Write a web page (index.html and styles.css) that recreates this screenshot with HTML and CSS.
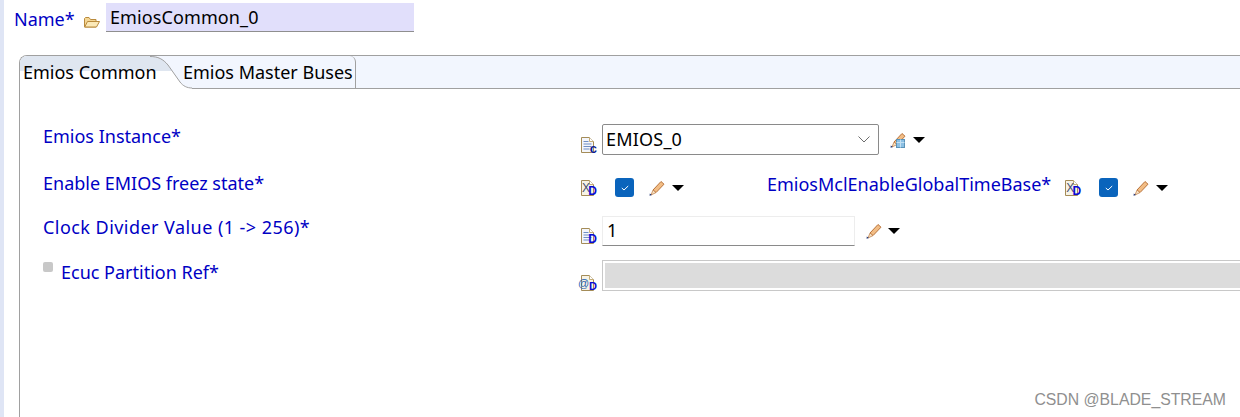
FILE: index.html
```html
<!DOCTYPE html>
<html lang="en">
<head>
    <meta charset="UTF-8">
    <meta name="viewport" content="width=device-width, initial-scale=1.0">
    <title>EmiosCommon_0</title>
    <link rel="stylesheet" href="styles.css">
</head>
<body>
    <svg class="defs" width="0" height="0">
        <defs>
            <symbol id="doc" viewBox="0 0 14 16">
                <path d="M.5.5h8l4 4v11H.5z" fill="#f7f3e6" stroke="#a48c58"/>
                <path d="M8.5.5v4h4" fill="#fff" stroke="#c4ad78"/>
            </symbol>
            <symbol id="doc-lines" viewBox="0 0 14 16">
                <path d="M.5.5h8l4 4v11H.5z" fill="#f4f6fb" stroke="#a48c58"/>
                <path d="M8.5.5v4h4" fill="#fff" stroke="#c4ad78"/>
                <path d="M2.5 4.5h5M2.5 7h8M2.5 9.5h8M2.5 12h6" stroke="#6f8fc4"/>
            </symbol>
            <symbol id="pencil" viewBox="0 0 16 16">
                <path d="M4 10 12 1.5l3 2.7-8 8.4z" fill="#f2bd85" stroke="#b9743c"/>
                <path d="M4 10l3 2.6L2 15z" fill="#f7e2c4" stroke="#b9743c" stroke-width=".7"/>
                <path d="M.8 13.4 2.8 15 .6 15.8z" fill="#12286e"/>
            </symbol>
        </defs>
    </svg>

    <div class="page">
        <div class="name-row">
            <label class="label name-label">Name*</label>
            <svg class="folder" width="16" height="12" viewBox="0 0 16 12">
                <path d="M.5 2.5V11h11.5V3.5H6.5L5 1.5H1.5z" fill="#f4d694" stroke="#b98a3c"/>
                <path d="M.7 11 3.5 5.5h12L12.5 11z" fill="#fbe9b8" stroke="#b98a3c"/>
            </svg>
            <input class="name-input" type="text" value="EmiosCommon_0">
        </div>

        <div class="folder-box">
            <div class="tabs">
                <div class="tab tab-active">Emios Common</div>
                <svg class="tab-curve" width="42" height="33" viewBox="0 0 42 33">
                    <path d="M0 0C8 0 13 3 18 9L22 15H0Z" fill="#dfe6f0"/>
                    <path d="M0 15H22L30 26C33 30 37 32 42 32V33H0Z" fill="#fff"/>
                    <path d="M0 .5C8 .5 13 3 18 9L30 26C33 30 37 32 42 32" fill="none" stroke="#a0a0a0"/>
                </svg>
                <div class="tab tab-plain">Emios Master Buses</div>
            </div>

            <div class="form">
                <div class="row row-instance">
                    <div class="label">Emios Instance*</div>
                    <div class="value">
                        <span class="ficon"><svg width="14" height="16"><use href="#doc-lines"/></svg><b class="letter letter-c">c</b></span>
                        <div class="combo">
                            <span class="combo-text">EMIOS_0</span>
                            <svg width="12" height="7" viewBox="0 0 12 7"><path d="M.5.5 6 6 11.5.5" fill="none" stroke="#6d6d6d"/></svg>
                        </div>
                        <svg class="pencil calc" width="16" height="16">
                            <use href="#pencil"/>
                            <rect x="6.5" y="7.5" width="8" height="8" fill="#8cc0e4" stroke="#5b93b8"/>
                            <path d="M6.5 10.5h8M10.5 7.5v8" stroke="#c4e0f2"/>
                        </svg>
                        <span class="arrow"></span>
                    </div>
                </div>

                <div class="row row-freeze">
                    <div class="label">Enable EMIOS freez state*</div>
                    <div class="value">
                        <span class="ficon"><svg width="14" height="16"><use href="#doc"/></svg><i class="mark">X</i><b class="letter">D</b></span>
                        <span class="check"><svg width="8" height="6" viewBox="0 0 8 6"><path d="M.8 3 3 5 7.2 1" fill="none" stroke="#fff"/></svg></span>
                        <svg class="pencil" width="16" height="16"><use href="#pencil"/></svg>
                        <span class="arrow"></span>
                        <div class="label label-second">EmiosMclEnableGlobalTimeBase*</div>
                        <span class="ficon"><svg width="14" height="16"><use href="#doc"/></svg><i class="mark">X</i><b class="letter">D</b></span>
                        <span class="check"><svg width="8" height="6" viewBox="0 0 8 6"><path d="M.8 3 3 5 7.2 1" fill="none" stroke="#fff"/></svg></span>
                        <svg class="pencil" width="16" height="16"><use href="#pencil"/></svg>
                        <span class="arrow"></span>
                    </div>
                </div>

                <div class="row row-divider">
                    <div class="label label-wide">Clock Divider Value (1 -&gt; 256)*</div>
                    <div class="value">
                        <span class="ficon"><svg width="14" height="16"><use href="#doc-lines"/></svg><b class="letter">D</b></span>
                        <div class="text-box">1</div>
                        <svg class="pencil" width="16" height="16"><use href="#pencil"/></svg>
                        <span class="arrow"></span>
                    </div>
                </div>

                <div class="row row-partition">
                    <div class="label"><span class="bullet"></span>Ecuc Partition Ref*</div>
                    <div class="value">
                        <span class="ficon"><svg width="14" height="16"><use href="#doc"/></svg><i class="mark mark-at">@</i><b class="letter letter-small">D</b></span>
                        <div class="ref-box"><div class="ref-fill"></div></div>
                    </div>
                </div>
            </div>
        </div>
    </div>

    <div class="watermark">CSDN @BLADE_STREAM</div>
</body>
</html>
```

FILE: styles.css
```css
html, body {
    height: 100%;
}
body {
    margin: 0;
    height: 417px;
    overflow: hidden;
    background: #fff;
    font-family: "Noto Sans", "Open Sans", Arial, sans-serif;
    font-size: 18px;
    color: #000;
    position: relative;
}
.defs {
    display: block;
    height: 0;
}
.page {
    border-left: 4px solid #dfe5f5;
    height: 417px;
    box-sizing: border-box;
}

.label {
    color: #0000c4;
    white-space: nowrap;
}

/* name row */
.name-row {
    display: flex;
    align-items: center;
    height: 32px;
    padding: 3px 0 0 10px;
}
.name-label {
    width: 70px;
}
.folder {
    margin: 6px 6px 0 0;
}
.name-input {
    align-self: flex-start;
    width: 308px;
    height: 29px;
    box-sizing: border-box;
    border: none;
    border-bottom: 1px solid #8f8f8f;
    background: #e1dffb;
    padding: 0 4px;
    font: inherit;
    letter-spacing: .1px;
    color: #000;
}

/* tab folder */
.folder-box {
    margin: 20px 0 0 15px;
    border: 1px solid #a0a0a0;
    border-right: none;
    border-bottom: none;
    border-top-left-radius: 8px;
    height: 362px;
    box-sizing: border-box;
    overflow: hidden;
}
.tabs {
    display: flex;
    height: 33px;
    box-sizing: border-box;
    background: #f2f6fe;
    border-bottom: 1px solid #a0a0a0;
}
.tab {
    height: 33px;
    line-height: 32px;
    white-space: nowrap;
}
.tab-active {
    position: relative;
    z-index: 1;
    width: 130px;
    box-sizing: border-box;
    padding-left: 3px;
    background: linear-gradient(#dfe6f0 15px, #fff 15px);
}
.tab-curve {
    flex: none;
}
.tab-plain {
    width: 173px;
    height: 32px;
    box-sizing: border-box;
    margin-left: -9px;
    border-right: 1px solid #a0a0a0;
    border-top-right-radius: 6px;
}

/* form */
.form {
    padding: 35px 0 0 23px;
}
.row {
    display: grid;
    grid-template-columns: 537px 1fr;
    align-items: center;
}
.row-instance {
    height: 31px;
    margin-bottom: 16px;
}
.row-freeze {
    height: 30px;
    margin-bottom: 14px;
}
.row-divider {
    height: 30px;
    margin-bottom: 15px;
}
.row-partition {
    height: 31px;
}
.row > .label {
    padding-bottom: 7px;
}
.row-freeze > .label {
    padding-bottom: 9px;
}
.label-wide {
    letter-spacing: .45px;
}
.value {
    display: flex;
    align-items: center;
    height: 100%;
}
.ficon {
    position: relative;
    flex: none;
    width: 14px;
    height: 16px;
    margin: 10px 7px 0 1px;
}
.row-freeze .ficon {
    margin-top: 0;
}
.row-partition .ficon {
    margin-top: 15px;
}
.ficon svg {
    display: block;
}
.letter {
    position: absolute;
    right: -2px;
    bottom: -1px;
    font: bold 12px/11px "Liberation Sans", Arial, sans-serif;
    color: #0a0ad0;
}
.letter-c {
    color: #0a1a90;
    font-size: 13px;
}
.letter-small {
    font-size: 11px;
}
.mark {
    position: absolute;
    left: 1px;
    top: 2px;
    font: 12px/12px "Liberation Sans", Arial, sans-serif;
    color: #46506e;
}
.mark-at {
    left: -3px;
    top: 2px;
    color: #1a60b0;
    font-size: 11px;
}
.combo {
    display: flex;
    align-items: center;
    justify-content: space-between;
    width: 277px;
    height: 31px;
    box-sizing: border-box;
    border: 1px solid #8a8a8a;
    border-radius: 2px;
    padding: 0 8px 0 3px;
}
.combo-text {
    padding-bottom: 1px;
    letter-spacing: .2px;
}
.pencil {
    flex: none;
    display: block;
}
.calc {
    margin-left: 11px;
}
.arrow {
    flex: none;
    width: 0;
    height: 0;
    margin-left: 7px;
    border-left: 6px solid transparent;
    border-right: 6px solid transparent;
    border-top: 6px solid #000;
}
.row-divider .arrow {
    margin-left: 6px;
}
.check {
    flex: none;
    display: flex;
    align-items: center;
    justify-content: center;
    width: 19px;
    height: 19px;
    margin: 0 15px 0 13px;
    border-radius: 3px;
    background: #0a64bc;
}
.label-second {
    margin: -8px 13px 0 83px;
}
.text-box {
    width: 253px;
    height: 30px;
    box-sizing: border-box;
    border: 1px solid #ededed;
    border-bottom-color: #8a8a8a;
    padding-left: 4px;
    line-height: 27px;
    margin-right: 11px;
}
.bullet {
    display: inline-block;
    width: 10px;
    height: 10px;
    margin: 0 8px 0 0;
    border-radius: 2px;
    background: #c8c8c8;
    vertical-align: 7px;
}
.ref-box {
    flex: 1;
    height: 31px;
    box-sizing: border-box;
    border: 1px solid #c8c8c8;
    border-right: none;
    padding: 2px 0 2px 2px;
}
.ref-fill {
    height: 100%;
    background: #dcdcdc;
}

.watermark {
    position: absolute;
    right: 14px;
    bottom: 8px;
    font: 15.8px "Liberation Sans", Arial, sans-serif;
    color: #8f8f8f;
}
```
